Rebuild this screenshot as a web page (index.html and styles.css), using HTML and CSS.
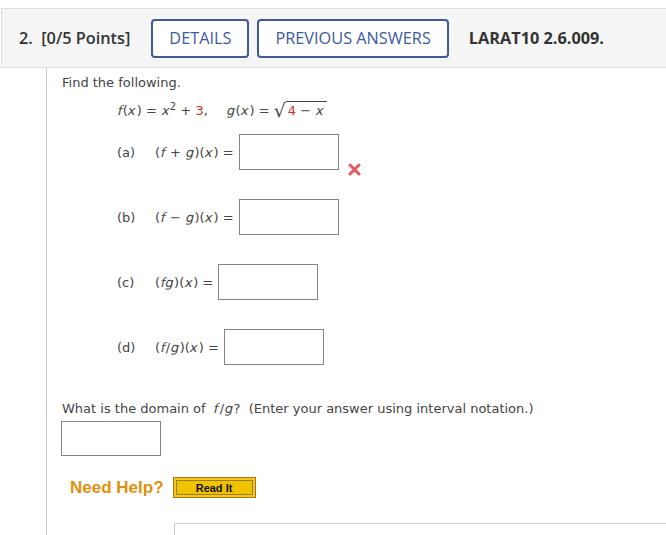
FILE: index.html
```html
<!DOCTYPE html>
<html lang="en">
<head>
  <meta charset="UTF-8">
  <title>LARAT10 2.6.009</title>
  <link rel="stylesheet" href="styles.css">
</head>
<body>
<div class="question-head">
  <span class="q-number">2.&nbsp; [0/5 Points]</span>
  <button class="head-btn">DETAILS</button>
  <button class="head-btn">PREVIOUS ANSWERS</button>
  <span class="q-code">LARAT10 2.6.009.</span>
</div>
<div class="question-body">
  <p class="intro">Find the following.</p>
  <p class="given">
    <i>f</i>(<i>x</i>) = <i>x</i><sup>2</sup> + <span class="num">3</span>,
    <span class="sp"></span>
    <i>g</i>(<i>x</i>) = <span class="root"><span class="radical">&#8730;</span><span class="radicand"><span class="num">4</span> &minus; <i>x</i></span></span>
  </p>

  <div class="part">
    <span class="part-label">(a)</span>
    <span class="expr">(<i>f</i> + <i>g</i>)(<i>x</i>) =</span>
    <input class="answer" type="text">
    <svg class="wrong" width="13" height="13" viewBox="0 0 13 13">
      <path d="M2 2 L11 11 M11 2 L2 11" stroke="#e8575a" stroke-width="3" stroke-linecap="round"/>
    </svg>
  </div>
  <div class="part">
    <span class="part-label">(b)</span>
    <span class="expr">(<i>f</i> &minus; <i>g</i>)(<i>x</i>) =</span>
    <input class="answer" type="text">
  </div>
  <div class="part">
    <span class="part-label">(c)</span>
    <span class="expr">(<i>fg</i>)(<i>x</i>) =</span>
    <input class="answer" type="text">
  </div>
  <div class="part">
    <span class="part-label">(d)</span>
    <span class="expr">(<i>f</i>/<i>g</i>)(<i>x</i>) =</span>
    <input class="answer" type="text">
  </div>

  <p class="domain">What is the domain of &nbsp;<i>f</i>/<i>g</i>? &nbsp;(Enter your answer using interval notation.)</p>
  <input class="answer domain-input" type="text">

  <div class="help">
    <span class="help-title">Need Help?</span>
    <button class="read-it">Read It</button>
  </div>
  <div class="next-box"></div>
</div>
</body>
</html>
```

FILE: styles.css
```css
body {
    margin: 0;
    font-family: "DejaVu Sans", Verdana, sans-serif;
    color: #444;
    background: #fff;
}

/* no italic face installed, so slant the math variables by hand */
i {
    display: inline-block;
    font-style: normal;
    transform: skewX(-13deg);
    margin: 0 0.6px;
}

.question-head {
    display: flex;
    align-items: center;
    height: 58px;
    margin: 8px 0 0 1px;
    padding-left: 17px;
    background: #f5f5f5;
    border: 1px solid #dedede;
    border-right: none;
    font-family: "Open Sans", sans-serif;
    font-size: 16.3px;
}

.q-number {
    font-weight: 600;
    color: #333;
    margin-right: 21px;
}

.head-btn {
    height: 39px;
    padding: 0 16px;
    margin-right: 8px;
    font-family: "Open Sans", sans-serif;
    font-size: 16.3px;
    color: #3b5a9f;
    background: #fff;
    border: 2px solid #3e5a9c;
    border-radius: 4px;
}

.q-code {
    margin-left: 12px;
    font-weight: 700;
    color: #333;
}

.question-body {
    margin-left: 46px;
    padding: 6px 0 0 15px;
    border-left: 1px solid #ccc;
    font-size: 13px;
}

.intro {
    margin: 0;
    line-height: 18px;
}

.given {
    margin: 10px 0 0 55px;
    line-height: 18px;
}

.given sup {
    font-size: 10px;
    line-height: 0;
}

.num {
    color: #d0301c;
}

.sp {
    display: inline-block;
    width: 10px;
}

.root {
    white-space: nowrap;
}

.radical {
    font-size: 19px;
    line-height: 0;
    vertical-align: -2px;
}

.radicand {
    border-top: 1px solid #444;
    padding: 1px 3px 0 2px;
}

.part {
    display: flex;
    align-items: center;
    margin: 14px 0 29px 55px;
    height: 36px;
}

.part + .part {
    margin-top: 0;
}

.part-label {
    width: 38px;
}

.expr {
    margin-right: 5px;
}

.answer {
    box-sizing: border-box;
    width: 100px;
    height: 36px;
    border: 1px solid #858585;
    background: #fff;
}

.wrong {
    align-self: flex-end;
    margin: 0 0 -6px 9px;
}

.domain {
    margin: 35px 0 3px 0;
    line-height: 18px;
}

.domain-input {
    display: block;
    height: 35px;
    margin-left: -1px;
}

.help {
    display: flex;
    align-items: center;
    margin: 21px 0 0 8px;
}

.help-title {
    font-family: "Liberation Sans", Arial, sans-serif;
    font-weight: 700;
    font-size: 17px;
    color: #e0900c;
    margin-right: 9px;
}

.read-it {
    width: 83px;
    height: 21px;
    padding: 0;
    font-family: "Liberation Sans", Arial, sans-serif;
    font-weight: 700;
    font-size: 11px;
    color: #111;
    background: #f0c300;
    border: 1px solid #a8770f;
    box-shadow: inset 0 0 0 2px #f3c81a, inset 0 0 0 3px #9c7d1c;
}

.next-box {
    height: 11px;
    margin: 25px 0 0 112px;
    border-top: 1px solid #ccc;
    border-left: 1px solid #ccc;
}
```
